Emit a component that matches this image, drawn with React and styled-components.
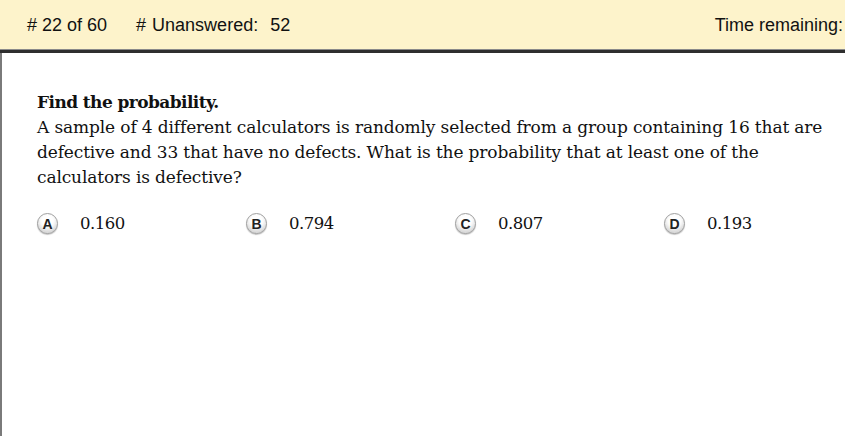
import React from 'react';
import styled, { createGlobalStyle } from 'styled-components';

const Global = createGlobalStyle`
  html, body { margin: 0; padding: 0; background: #fff; }
  body { width: 845px; height: 436px; overflow: hidden; }
`;

const Page = styled.div`
  width: 845px;
  height: 436px;
  display: flex;
  flex-direction: column;
  overflow: hidden;
`;

const Header = styled.div`
  height: 50px;
  flex: none;
  background: #fdf3cb;
  border-bottom: 3px solid #2e2e2e;
  box-shadow: inset 0 -1px 0 #8a8a8a;
  display: flex;
  align-items: center;
  padding: 0 0 0 27px;
  font-family: "Liberation Sans", Arial, sans-serif;
  font-size: 18px;
  color: #111;
  white-space: nowrap;
  overflow: hidden;
`;

const Counter = styled.span`
  margin-right: ${p => p.gap || 0}px;
  word-spacing: ${p => p.wide ? 1 : 0}px;
`;

const Timer = styled.span`
  margin-left: auto;
  margin-right: 2px;
`;

const Body = styled.div`
  flex: 1;
  border-left: 2px solid #7a7a7a;
  padding: 37px 0 0 35px;
`;

const Question = styled.div`
  font-family: "DejaVu Serif", "Liberation Serif", serif;
  font-size: 17px;
  line-height: 25px;
  color: #111;
  letter-spacing: -0.13px;
  white-space: nowrap;
`;

const Title = styled.div`
  font-weight: bold;
  letter-spacing: -0.57px;
`;

const Options = styled.div`
  display: grid;
  grid-template-columns: repeat(4, 209px);
  margin-top: 23px;
`;

const Option = styled.div`
  display: flex;
  align-items: center;
  gap: 22px;
`;

const Bubble = styled.span`
  width: 19px;
  height: 19px;
  border-radius: 50%;
  border: 1.5px solid #a0a0a0;
  box-shadow: inset 0 -3px 4px #d4d4d4, 0 1px 1px #c4c4c4;
  background: #fff;
  display: flex;
  align-items: center;
  justify-content: center;
  font-family: "Liberation Sans", Arial, sans-serif;
  font-weight: bold;
  font-size: 14px;
  color: #222;
`;

const Value = styled.span`
  font-family: "DejaVu Serif", "Liberation Serif", serif;
  font-size: 16.5px;
  color: #111;
  letter-spacing: -0.5px;
`;

const options = [
  ['A', '0.160'],
  ['B', '0.794'],
  ['C', '0.807'],
  ['D', '0.193'],
];

export default function App() {
  return (
    <Page>
      <Global />
      <Header>
        <Counter gap={29}># 22 of 60</Counter>
        <Counter wide># Unanswered:&nbsp; 52</Counter>
        <Timer>Time remaining:</Timer>
      </Header>
      <Body>
        <Question>
          <Title>Find the probability.</Title>
          A sample of 4 different calculators is randomly selected from a group containing 16 that are<br />
          defective and 33 that have no defects. What is the probability that at least one of the<br />
          calculators is defective?
        </Question>
        <Options>
          {options.map(([letter, value]) => (
            <Option key={letter}>
              <Bubble>{letter}</Bubble>
              <Value>{value}</Value>
            </Option>
          ))}
        </Options>
      </Body>
    </Page>
  );
}
